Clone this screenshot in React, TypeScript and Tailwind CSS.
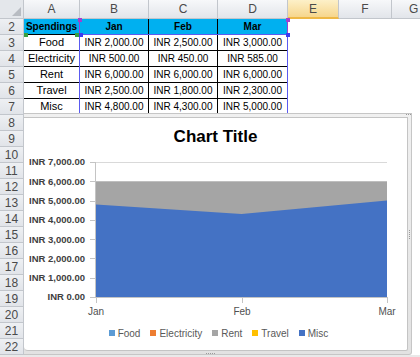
import React from "react";

const cols = ["A", "B", "C", "D", "E", "F"];
const rows: [string, string, string, string][] = [
  ["Food", "INR 2,000.00", "INR 2,500.00", "INR 3,000.00"],
  ["Electricity", "INR 500.00", "INR 450.00", "INR 585.00"],
  ["Rent", "INR 6,000.00", "INR 6,000.00", "INR 6,000.00"],
  ["Travel", "INR 2,500.00", "INR 1,800.00", "INR 2,300.00"],
  ["Misc", "INR 4,800.00", "INR 4,300.00", "INR 5,000.00"],
];

const hdr =
  "flex items-center justify-center border-r border-b border-[#c2c6cc] bg-gradient-to-b from-[#f7f8fa] to-[#e2e5ea] text-[12px] text-[#4a4a4a]";
const rowHdr =
  "flex items-center justify-center border-r border-b border-[#c2c6cc] bg-gradient-to-b from-[#eef0f3] to-[#e1e4e9] text-[12px] text-[#4a4a4a]";
const cell =
  "flex items-center justify-center border-r border-b border-black text-black whitespace-nowrap";

function Handle({ x, y, c }: { x: number; y: number; c: string }) {
  return (
    <div
      className="absolute w-[4px] h-[4px]"
      style={{ left: x, top: y, backgroundColor: c }}
    />
  );
}

export default function App() {
  const yTicks = [0, 1, 2, 3, 4, 5, 6, 7];
  const yOf = (v: number) => 140 - (v * 135) / 7000;
  return (
    <div className="relative w-[420px] h-[357px] overflow-hidden bg-[#e9e9e9] font-['Liberation_Sans',Arial,sans-serif]">
      <div className="grid grid-cols-[24px_56px_69px_69px_70px_51px_53px_1fr] grid-rows-[19px_repeat(21,16px)] bg-white">
        {/* header row */}
        <div className="relative border-r border-b border-[#c2c6cc] bg-[#e4e7eb]">
          <div className="absolute right-[2px] bottom-[2px] w-0 h-0 border-l-[9px] border-l-transparent border-b-[9px] border-b-[#b8bcc2]" />
        </div>
        {cols.map((c) =>
          c === "E" ? (
            <div
              key={c}
              className="flex items-center justify-center border-r border-b-2 border-r-[#c2c6cc] border-b-[#eeb846] bg-gradient-to-b from-[#fdf0c8] to-[#f6d68c] text-[12px] text-[#4a4a4a]"
            >
              {c}
            </div>
          ) : (
            <div key={c} className={hdr}>
              {c}
            </div>
          )
        )}
        <div className="flex items-center border-b border-[#c2c6cc] bg-gradient-to-b from-[#f7f8fa] to-[#e2e5ea] text-[12px] text-[#4a4a4a] pl-[17px]">
          G
        </div>

        {/* row 2 */}
        <div className={rowHdr}>2</div>
        <div className={`${cell} bg-[#00b0f0] font-bold text-[10px]`}>Spendings</div>
        <div className={`${cell} bg-[#00b0f0] font-bold text-[10px]`}>Jan</div>
        <div className={`${cell} bg-[#00b0f0] font-bold text-[10px]`}>Feb</div>
        <div className={`${cell} bg-[#00b0f0] font-bold text-[10px]`}>Mar</div>
        <div />
        <div />
        <div />

        {rows.map((r, i) => (
          <React.Fragment key={r[0]}>
            <div className={rowHdr}>{i + 3}</div>
            <div className={`${cell} text-[11px]`}>{r[0]}</div>
            <div className={`${cell} text-[10px]`}>{r[1]}</div>
            <div className={`${cell} text-[10px]`}>{r[2]}</div>
            <div className={`${cell} text-[10px]`}>{r[3]}</div>
            <div />
            <div />
            <div />
          </React.Fragment>
        ))}

        {Array.from({ length: 15 }, (_, i) => i + 8).map((n) => (
          <React.Fragment key={n}>
            <div className={rowHdr}>{n}</div>
            <div className="col-span-7" />
          </React.Fragment>
        ))}
      </div>

      {/* chart data range highlight */}
      <div className="absolute left-[79px] top-[19px] w-[1px] h-[16px] bg-[#a040d0]" />
      <div className="absolute left-[287px] top-[19px] w-[1px] h-[16px] bg-[#a040d0]" />
      <div className="absolute left-[79px] top-[34px] w-[209px] h-[1px] bg-[#5a5af0]" />
      <div className="absolute left-[79px] top-[34px] w-[1px] h-[81px] bg-[#5a5af0]" />
      <div className="absolute left-[287px] top-[34px] w-[1px] h-[81px] bg-[#5a5af0]" />
      <div className="absolute left-[79px] top-[114px] w-[209px] h-[1px] bg-[#5a5af0]" />
      <div className="absolute left-[24px] top-[114px] w-[55px] h-[1px] bg-[#6fb35f]" />
      <Handle x={78} y={18} c="#a040d0" />
      <Handle x={286} y={18} c="#a040d0" />
      <Handle x={24} y={33} c="#3aa040" />
      <Handle x={75} y={33} c="#3aa040" />
      <Handle x={79} y={33} c="#3b3bf0" />
      <Handle x={286} y={33} c="#3b3bf0" />
      <Handle x={79} y={113} c="#7b7bf5" />
      <Handle x={286} y={113} c="#7b7bf5" />

      {/* chart */}
      <div className="absolute left-[24px] top-[113px] w-[388px] h-[242px] bg-gradient-to-b from-[#f0f0f0] to-[#e2e2e2] border-t border-r border-b border-[#c6c6c6] pt-[3px] pr-[3px] pb-[3px] rounded-br-[3px]">
        <div className="flex flex-col h-full bg-white border-t border-r border-b border-[#c4c4c4] rounded-bl-[4px] rounded-br-[2px]">
          <div className="h-[39px] pt-[9px] text-center text-[17px] leading-[20px] font-bold text-black">
            Chart Title
          </div>
          <svg width="383" height="165" className="block" fontFamily="Liberation Sans, Arial, sans-serif">
            <line x1="66" y1="5.5" x2="363" y2="5.5" stroke="#d9d9d9" />
            <rect x="72" y={yOf(6000)} width="291" height={140 - yOf(6000)} fill="#a5a5a5" />
            <polygon
              points={`72,${yOf(4800)} 217.5,${yOf(4300)} 363,${yOf(5000)} 363,140 72,140`}
              fill="#4472c4"
            />
            <line x1="71.5" y1="5" x2="71.5" y2="140" stroke="#c4c4c4" />
            {yTicks.map((t) => (
              <g key={t}>
                <line x1="66" y1={Math.round(yOf(t * 1000)) + 0.5} x2="72" y2={Math.round(yOf(t * 1000)) + 0.5} stroke="#c4c4c4" />
                <text
                  x="61"
                  y={yOf(t * 1000) + 3.4}
                  textAnchor="end"
                  fontSize="9.5"
                  fontWeight="bold"
                  fill="#404040"
                >
                  {`INR ${t === 0 ? "0.00" : `${t},000.00`}`}
                </text>
              </g>
            ))}
            <line x1="72" y1="140.5" x2="363" y2="140.5" stroke="#c4c4c4" />
            {[72, 217.5, 363].map((x) => (
              <line key={x} x1={Math.round(x) + 0.5} y1="140" x2={Math.round(x) + 0.5} y2="146" stroke="#c4c4c4" />
            ))}
            {[
              [72, "Jan"],
              [218, "Feb"],
              [363, "Mar"],
            ].map(([x, l]) => (
              <text key={l as string} x={x as number} y="157.5" textAnchor="middle" fontSize="10" fill="#505050">
                {l}
              </text>
            ))}
          </svg>
          <div className="h-[22px] flex items-center justify-center gap-[10px] pl-[6px] text-[10px] text-[#595959]">
            {[
              ["Food", "bg-[#5b9bd5]"],
              ["Electricity", "bg-[#ed7d31]"],
              ["Rent", "bg-[#a5a5a5]"],
              ["Travel", "bg-[#ffc000]"],
              ["Misc", "bg-[#4472c4]"],
            ].map(([l, c]) => (
              <div key={l} className="flex items-center gap-[3px]">
                <span className={`block w-[6px] h-[6px] ${c}`} />
                <span>{l}</span>
              </div>
            ))}
          </div>
        </div>
      </div>
      {/* frame grips */}
      <div className="absolute left-[206px] top-[353px] flex gap-[1px]">
        {[0, 1, 2, 3, 4].map((i) => (
          <span key={i} className="block w-[1px] h-[1px] bg-[#9a9a9a]" />
        ))}
      </div>
      <div className="absolute left-[409px] top-[230px] flex flex-col gap-[1px]">
        {[0, 1, 2, 3, 4].map((i) => (
          <span key={i} className="block w-[1px] h-[1px] bg-[#9a9a9a]" />
        ))}
      </div>
      <div className="absolute left-[406px] top-[114px] flex gap-[1px]">
        {[0, 1, 2].map((i) => (
          <span key={i} className="block w-[1px] h-[1px] bg-[#9a9a9a]" />
        ))}
      </div>
    </div>
  );
}
